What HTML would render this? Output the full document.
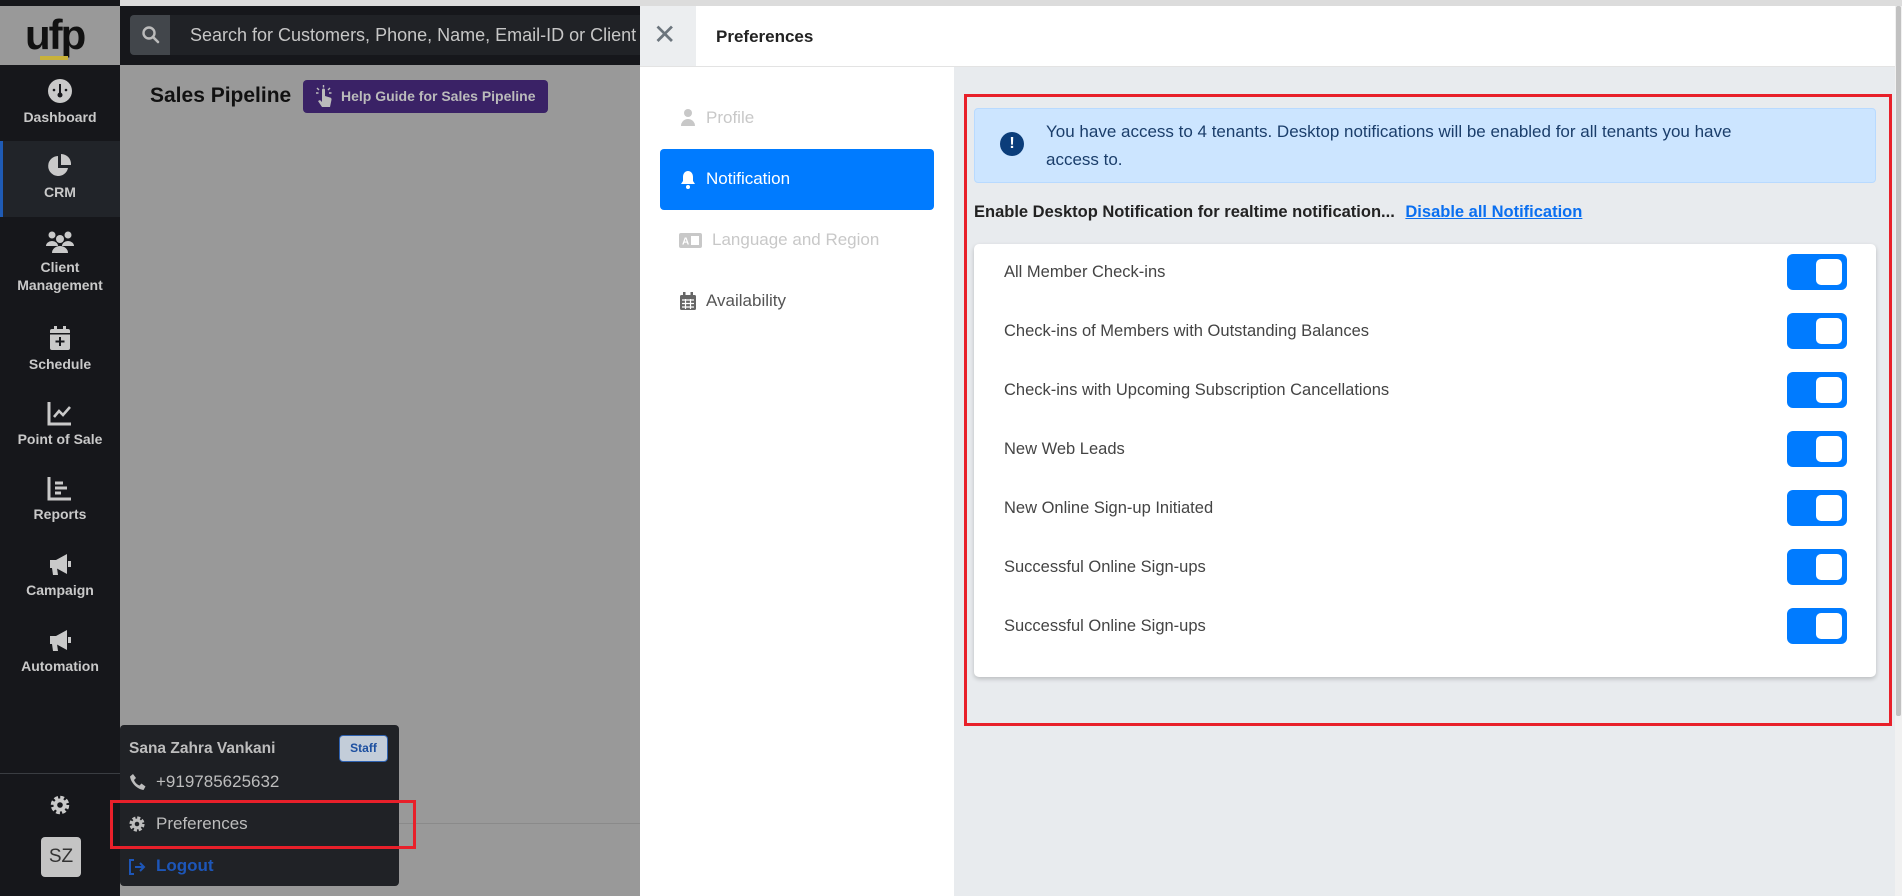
<!DOCTYPE html>
<html><head><meta charset="utf-8"><style>
*{box-sizing:border-box;margin:0;padding:0}
body{width:1902px;height:896px;overflow:hidden;position:relative;font-family:"Liberation Sans",sans-serif;background:#999}
.a{position:absolute}
.side{left:0;top:0;width:120px;height:896px;background:#16171b}
.nav{left:0;width:120px;text-align:center;color:#c9c9c9;font-size:14px;font-weight:bold;line-height:18px}
.nav svg{display:block;margin:0 auto 4px}
.row{left:974px;width:902px;height:59px}
.row span{position:absolute;left:30px;top:19px;font-size:16.5px;color:#444}
.tg{position:absolute;left:813px;top:10px;width:60px;height:36px;background:#007bff;border-radius:6px}
.tg i{position:absolute;right:5px;top:5px;width:26px;height:26px;background:#fff;border-radius:5px}
</style></head><body>
<div class="a" style="left:0;top:0;width:1902px;height:6px;background:#dcdcdc"></div>
<div class="a side"></div>
<div class="a" style="left:0;top:6px;width:120px;height:59px;background:#999"></div>
<div class="a" style="left:25px;top:14px;font-size:42px;font-weight:bold;color:#111;letter-spacing:-2px;line-height:42px">ufp</div>
<div class="a" style="left:40px;top:56px;width:28px;height:4px;background:#c9b23a"></div>
<div class="a" style="left:120px;top:6px;width:520px;height:59px;background:#16171b"></div>
<div class="a" style="left:130px;top:15px;width:510px;height:40px;background:#202226;border-radius:4px 0 0 4px"></div>
<div class="a" style="left:130px;top:15px;width:40px;height:40px;background:#42464b;border-radius:4px 0 0 4px"></div>
<svg class="a" style="left:141px;top:25px" width="20" height="20" viewBox="0 0 20 20"><circle cx="8" cy="8" r="5.5" fill="none" stroke="#bbb" stroke-width="2.4"/><path d="M12 12l5 5" stroke="#bbb" stroke-width="2.6" stroke-linecap="round"/></svg>
<div class="a" style="left:190px;top:25px;font-size:18px;color:#c6c6c6;white-space:nowrap;width:450px;overflow:hidden">Search for Customers, Phone, Name, Email-ID or Client</div>

<div class="a" style="left:0;top:141px;width:120px;height:76px;background:#212429;border-left:3px solid #1f5bb5"></div>
<div class="a nav" style="top:78px"><svg width="26" height="26" viewBox="0 0 26 26"><circle cx="13" cy="13" r="12" fill="#c9c9c9"/><path d="M13 6v10" stroke="#16171b" stroke-width="2"/><circle cx="13" cy="17" r="2.5" fill="#16171b"/><circle cx="7" cy="12" r="1.3" fill="#16171b"/><circle cx="19" cy="12" r="1.3" fill="#16171b"/></svg>Dashboard</div>
<div class="a nav" style="top:153px"><svg width="26" height="26" viewBox="0 0 26 26"><path d="M11 3a10 10 0 1 0 10 12H11z" fill="#c9c9c9"/><path d="M14 1v11h10A10 10 0 0 0 14 1z" fill="#c9c9c9"/></svg>CRM</div>
<div class="a nav" style="top:230px"><svg width="30" height="24" viewBox="0 0 30 24"><circle cx="7" cy="5" r="3.5" fill="#c9c9c9"/><circle cx="23" cy="5" r="3.5" fill="#c9c9c9"/><circle cx="15" cy="9" r="4" fill="#c9c9c9"/><path d="M1 16a6 5 0 0 1 12 0zM17 16a6 5 0 0 1 12 0zM7 23a8 7 0 0 1 16 0z" fill="#c9c9c9"/></svg>Client<br>Management</div>
<div class="a nav" style="top:325px"><svg width="22" height="26" viewBox="0 0 22 26"><rect x="1" y="4" width="20" height="21" rx="2" fill="#c9c9c9"/><rect x="5" y="1" width="3" height="6" fill="#c9c9c9"/><rect x="14" y="1" width="3" height="6" fill="#c9c9c9"/><rect x="1" y="8" width="20" height="1.5" fill="#16171b"/><path d="M11 12v9M6.5 16.5h9" stroke="#16171b" stroke-width="2"/></svg>Schedule</div>
<div class="a nav" style="top:400px"><svg width="26" height="26" viewBox="0 0 26 26"><path d="M2 2v22h22" stroke="#c9c9c9" stroke-width="3" fill="none"/><path d="M7 17l5-6 4 4 7-8" stroke="#c9c9c9" stroke-width="2.6" fill="none"/></svg>Point of Sale</div>
<div class="a nav" style="top:475px"><svg width="26" height="26" viewBox="0 0 26 26"><path d="M2 2v22h22" stroke="#c9c9c9" stroke-width="3" fill="none"/><path d="M8 8h8M8 13h12M8 18h6" stroke="#c9c9c9" stroke-width="3"/></svg>Reports</div>
<div class="a nav" style="top:551px"><svg width="26" height="26" viewBox="0 0 26 26"><path d="M3 9h6l11-6v20L9 17H3z" fill="#c9c9c9"/><path d="M5 17h5l1 7H6z" fill="#c9c9c9"/><rect x="21" y="10" width="3" height="6" fill="#c9c9c9"/></svg>Campaign</div>
<div class="a nav" style="top:627px"><svg width="26" height="26" viewBox="0 0 26 26"><path d="M3 9h6l11-6v20L9 17H3z" fill="#c9c9c9"/><path d="M5 17h5l1 7H6z" fill="#c9c9c9"/><rect x="21" y="10" width="3" height="6" fill="#c9c9c9"/></svg>Automation</div>
<div class="a" style="left:0;top:773px;width:120px;height:1px;background:#3a3d42"></div>
<svg class="a" style="left:49px;top:794px" width="22" height="22" viewBox="0 0 22 22"><circle cx="11" cy="11" r="7" fill="none" stroke="#c9c9c9" stroke-width="4.5" stroke-dasharray="3.5 2"/><circle cx="11" cy="11" r="6.5" fill="#c9c9c9"/><circle cx="11" cy="11" r="2.8" fill="#16171b"/></svg>
<div class="a" style="left:41px;top:837px;width:40px;height:40px;background:#c4c4c4;border-radius:4px;color:#333;font-size:19px;text-align:center;line-height:40px">SZ</div>

<div class="a" style="left:120px;top:823px;width:520px;height:1px;background:#8a8a8a"></div>
<div class="a" style="left:150px;top:84px;font-size:21px;font-weight:bold;color:#111">Sales Pipeline</div>
<div class="a" style="left:303px;top:80px;width:245px;height:33px;background:#3a2266;border-radius:4px"></div>
<svg class="a" style="left:313px;top:85px" width="22" height="24" viewBox="0 0 22 24"><path d="M9 10V5a1.5 1.5 0 0 1 3 0v6l5 1.5a2 2 0 0 1 1.5 2.2L17 22H9l-4-6 2-1 2 2z" fill="#bbb"/><path d="M10.5 0v2.5M4 3l2 2M17 3l-2 2M3 8h2.5M16 8h2.5" stroke="#bbb" stroke-width="1.4"/></svg>
<div class="a" style="left:341px;top:88px;font-size:14px;font-weight:bold;color:#bbb">Help Guide for Sales Pipeline</div>

<!-- popup -->
<div class="a" style="left:120px;top:725px;width:279px;height:161px;background:#202226;border-radius:4px"></div>
<div class="a" style="left:129px;top:740px;font-size:15.5px;font-weight:bold;color:#bdbdbd">Sana Zahra Vankani</div>
<div class="a" style="left:339px;top:735px;width:49px;height:27px;background:#c3cdd9;border:1px solid #2f62b0;border-radius:4px;color:#1c4fa0;font-size:12px;font-weight:bold;text-align:center;line-height:25px">Staff</div>
<svg class="a" style="left:129px;top:773px" width="18" height="18" viewBox="0 0 18 18"><path d="M4 1l3 4-2 2c1 2.5 3 4.5 5.5 5.5l2-2 4 3-2 3.5C8 16 2 10 1 3.5z" fill="#bdbdbd"/></svg>
<div class="a" style="left:156px;top:772px;font-size:17px;color:#bdbdbd">+919785625632</div>
<svg class="a" style="left:128px;top:815px" width="18" height="18" viewBox="0 0 22 22"><circle cx="11" cy="11" r="7" fill="none" stroke="#bdbdbd" stroke-width="4.5" stroke-dasharray="3.5 2"/><circle cx="11" cy="11" r="6.5" fill="#bdbdbd"/><circle cx="11" cy="11" r="2.8" fill="#202226"/></svg>
<div class="a" style="left:156px;top:814px;font-size:17px;color:#bdbdbd">Preferences</div>
<div class="a" style="left:110px;top:800px;width:306px;height:49px;border:3px solid #e8202a"></div>
<svg class="a" style="left:128px;top:858px" width="18" height="18" viewBox="0 0 18 18"><path d="M6 2H2v14h4" stroke="#1d56b8" stroke-width="2" fill="none"/><path d="M7 9h9M12 5l4 4-4 4" stroke="#1d56b8" stroke-width="2" fill="none"/></svg>
<div class="a" style="left:156px;top:856px;font-size:17px;font-weight:bold;color:#1d56b8">Logout</div>

<!-- panel -->
<div class="a" style="left:640px;top:6px;width:1262px;height:890px;background:#fff"></div>
<div class="a" style="left:640px;top:6px;width:56px;height:60px;background:#eceef0"></div>
<div class="a" style="left:653px;top:20px;font-size:28px;color:#6c757d;line-height:30px">✕</div>
<div class="a" style="left:640px;top:66px;width:1262px;height:1px;background:#e3e3e3"></div>
<div class="a" style="left:716px;top:27px;font-size:17px;font-weight:bold;color:#222">Preferences</div>
<div class="a" style="left:954px;top:67px;width:942px;height:829px;background:#e8ebee"></div>
<div class="a" style="left:1895px;top:6px;width:7px;height:890px;background:#f1f1f1"></div>
<div class="a" style="left:1896px;top:6px;width:5px;height:710px;background:#c1c1c1;border-radius:2px"></div>

<svg class="a" style="left:681px;top:108px" width="14" height="18" viewBox="0 0 14 18"><circle cx="7" cy="5" r="4" fill="#c8c8c8"/><path d="M0 18a7 7 0 0 1 14 0z" fill="#c8c8c8"/></svg>
<div class="a" style="left:706px;top:108px;font-size:17px;color:#c8c8c8">Profile</div>
<div class="a" style="left:660px;top:149px;width:274px;height:61px;background:#007bff;border-radius:4px"></div>
<svg class="a" style="left:680px;top:170px" width="16" height="19" viewBox="0 0 16 19"><path d="M8 1c3 0 5 2.5 5 6v4l2 3H1l2-3V7c0-3.5 2-6 5-6z" fill="#fff"/><circle cx="8" cy="17" r="2" fill="#fff"/></svg>
<div class="a" style="left:706px;top:169px;font-size:17px;color:#fff">Notification</div>
<svg class="a" style="left:679px;top:233px" width="23" height="15" viewBox="0 0 23 15"><rect width="23" height="15" rx="2" fill="#c8c8c8"/><text x="3" y="11.5" font-size="10" font-family="Liberation Sans" fill="#fff" font-weight="bold">A</text><rect x="12" y="3" width="8" height="9" fill="#fff"/></svg>
<div class="a" style="left:712px;top:230px;font-size:17px;color:#c8c8c8">Language and Region</div>
<svg class="a" style="left:680px;top:292px" width="16" height="18" viewBox="0 0 16 18"><rect y="3" width="16" height="15" rx="1.5" fill="#666"/><rect x="3" y="0" width="2.5" height="5" fill="#666"/><rect x="10.5" y="0" width="2.5" height="5" fill="#666"/><path d="M2 8h12M2 11.5h12M2 15h12M5.5 7v10M10.5 7v10" stroke="#fff" stroke-width="1.2"/></svg>
<div class="a" style="left:706px;top:291px;font-size:17px;color:#555">Availability</div>

<div class="a" style="left:964px;top:94px;width:928px;height:632px;border:3.5px solid #e8202a"></div>
<div class="a" style="left:974px;top:108px;width:902px;height:75px;background:#cce5ff;border:1px solid #b8daff;border-radius:4px"></div>
<div class="a" style="left:1000px;top:132px;width:24px;height:24px;border-radius:50%;background:#0b3d7a;color:#fff;font-weight:bold;font-size:16px;text-align:center;line-height:24px">!</div>
<div class="a" style="left:1046px;top:118px;width:735px;font-size:17px;line-height:28px;color:#1b3e6b">You have access to 4 tenants. Desktop notifications will be enabled for all tenants you have access to.</div>
<div class="a" style="left:974px;top:203px;font-size:16.5px;font-weight:bold;color:#222;white-space:nowrap">Enable Desktop Notification for realtime notification... <span style="color:#0a6ff0;text-decoration:underline;margin-left:6px">Disable all Notification</span></div>
<div class="a" style="left:974px;top:244px;width:902px;height:433px;background:#fff;border-radius:5px;box-shadow:0 2px 5px rgba(0,0,0,.2)"></div>
<div class="a row" style="top:244px"><span>All Member Check-ins</span><div class="tg"><i></i></div></div>
<div class="a row" style="top:303px"><span>Check-ins of Members with Outstanding Balances</span><div class="tg"><i></i></div></div>
<div class="a row" style="top:362px"><span>Check-ins with Upcoming Subscription Cancellations</span><div class="tg"><i></i></div></div>
<div class="a row" style="top:421px"><span>New Web Leads</span><div class="tg"><i></i></div></div>
<div class="a row" style="top:480px"><span>New Online Sign-up Initiated</span><div class="tg"><i></i></div></div>
<div class="a row" style="top:539px"><span>Successful Online Sign-ups</span><div class="tg"><i></i></div></div>
<div class="a row" style="top:598px"><span>Successful Online Sign-ups</span><div class="tg"><i></i></div></div>
</body></html>
